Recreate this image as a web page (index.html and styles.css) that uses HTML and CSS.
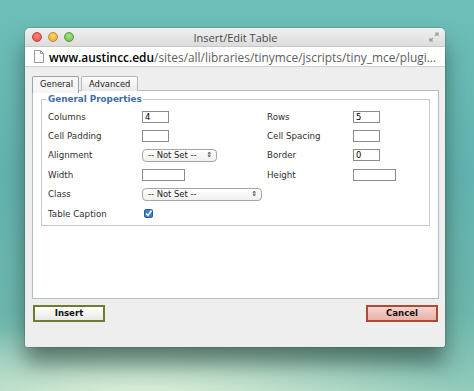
FILE: index.html
```html
<!DOCTYPE html>
<html>
<head>
<meta charset="utf-8">
<link rel="stylesheet" href="styles.css">
</head>
<body>
<div class="window">
  <div class="titlebar">
    <div class="lights">
      <span class="light red"></span>
      <span class="light yellow"></span>
      <span class="light green"></span>
    </div>
    <div class="title">Insert/Edit Table</div>
    <svg class="resize" width="10" height="10" viewBox="0 0 10 10">
      <path d="M6 1h3v3M9 1L6 4M1 6v3h3M1 9l3-3" fill="none" stroke="#9a9a9a" stroke-width="1.2"/>
    </svg>
  </div>
  <div class="urlbar">
    <svg class="pageicon" width="10" height="13" viewBox="0 0 10 13">
      <path d="M0.5 0.5h6l3 3v9h-9z" fill="#fff" stroke="#999"/>
      <path d="M6.5 0.5v3h3" fill="none" stroke="#999"/>
    </svg>
    <span class="host">www.austincc.edu</span><span class="path">/sites/all/libraries/tinymce/jscripts/tiny_mce/plugi...</span>
  </div>
  <div class="content">
    <div class="tabs">
      <div class="tab active">General</div>
      <div class="tab">Advanced</div>
    </div>
    <div class="panel">
      <fieldset class="props">
        <legend>General Properties</legend>
        <div class="grid">
          <label>Columns</label><span class="input w27">4</span>
          <label>Rows</label><span class="input w27">5</span>

          <label>Cell Padding</label><span class="input w27"></span>
          <label>Cell Spacing</label><span class="input w27"></span>

          <label>Alignment</label><span class="select w75">-- Not Set --<i>&#8661;</i></span>
          <label>Border</label><span class="input w27">0</span>

          <label>Width</label><span class="input w43"></span>
          <label>Height</label><span class="input w43"></span>

          <label>Class</label><span class="select w120 span3">-- Not Set --<i>&#8661;</i></span>

          <label>Table Caption</label><span class="check span3"><svg width="9" height="9" viewBox="0 0 9 9"><rect x="0.5" y="0.5" width="8" height="8" rx="1.5" fill="#3d7fd0" stroke="#2a5d9c"/><path d="M2 4.5l2 2 3.5-5" fill="none" stroke="#fff" stroke-width="1.4"/></svg></span>
        </div>
      </fieldset>
    </div>
    <div class="buttons">
      <div class="btn insert">Insert</div>
      <div class="btn cancel">Cancel</div>
    </div>
  </div>
</div>
</body>
</html>
```
FILE: styles.css
```css
html, body {
  margin: 0;
  padding: 0;
}
body {
  width: 474px;
  height: 391px;
  overflow: hidden;
  box-sizing: border-box;
  padding: 28px 0 0 25px;
  background:
    radial-gradient(ellipse 320px 80px at 140px 400px, rgba(228,242,218,0.95), rgba(228,242,218,0) 100%),
    linear-gradient(180deg, #6ebfb9 0%, #62b3b0 45%, #6db7ad 80%, #94cbbb 100%);
  font-family: "DejaVu Sans", Verdana, sans-serif;
}
.window {
  width: 420px;
  height: 319px;
  background: #ededed;
  border-radius: 5px 5px 3px 3px;
  box-shadow: 0 16px 22px rgba(40, 60, 50, 0.6), 0 0 0 1px rgba(0,0,0,0.12);
  display: flex;
  flex-direction: column;
  overflow: hidden;
}
.titlebar {
  height: 18px;
  background: linear-gradient(#f0f0f0, #dcdcdc);
  display: flex;
  align-items: center;
  padding: 0 6px 0 7px;
}
.lights {
  display: flex;
  gap: 6px;
}
.light {
  width: 10px;
  height: 10px;
  border-radius: 50%;
  box-sizing: border-box;
}
.red { background: radial-gradient(circle at 50% 35%, #ff8c85, #e0443c); border: 1px solid #c2423b; }
.yellow { background: radial-gradient(circle at 50% 35%, #ffd67a, #e0a52b); border: 1px solid #c08b2a; }
.green { background: radial-gradient(circle at 50% 35%, #a8e28a, #6cb84b); border: 1px solid #5a9a3d; }
.title {
  flex: 1;
  text-align: center;
  font-family: "Open Sans", "DejaVu Sans", sans-serif;
  font-size: 11px;
  color: #4a4a4a;
  padding-right: 32px;
}
.resize {
  display: block;
}
.urlbar {
  height: 21px;
  background: #fff;
  border-top: 1px solid #c8c8c8;
  border-bottom: 1px solid #cfcfcf;
  box-sizing: border-box;
  display: flex;
  align-items: center;
  padding-left: 9px;
  font-family: "Open Sans", "DejaVu Sans", sans-serif;
  font-size: 11.9px;
  white-space: nowrap;
  overflow: hidden;
}
.pageicon {
  margin-right: 5px;
  flex: none;
}
.host { color: #000; font-weight: 600; }
.path { color: #5e5e5e; }
.content {
  flex: 1;
  padding: 9px 6px 0 7px;
  background: #eeeeee;
  display: flex;
  flex-direction: column;
}
.tabs {
  display: flex;
  gap: 2px;
  height: 15px;
  position: relative;
  z-index: 1;
}
.tab {
  font-size: 8.4px;
  color: #222;
  border: 1px solid #b8b8b8;
  border-bottom: none;
  border-radius: 2px 2px 0 0;
  background: linear-gradient(#fbfbfb, #e9e9e9);
  padding: 0 7px;
  line-height: 14px;
}
.tab.active {
  background: #f6f6f6;
  height: 16px;
  width: 31px;
  border-color: #9aa4ae;
}
.panel {
  height: 209px;
  background: #fff;
  border: 1px solid #b4bcc4;
  box-sizing: border-box;
  margin-top: -1px;
  padding: 3px 8px 0 8px;
}
.props {
  margin: 0;
  border: 1px solid #c9c9c9;
  padding: 3px 0 7px 6px;
  height: 132px;
  box-sizing: border-box;
}
.props legend {
  font-size: 8.8px;
  font-weight: bold;
  color: #3e6ea8;
  padding: 0 1px;
  margin-left: -1px;
}
.grid {
  display: grid;
  grid-template-columns: 94px 125px 86px auto;
  grid-auto-rows: 19.4px;
  align-items: center;
}
.grid label {
  font-size: 8.7px;
  color: #2e2e2e;
}
.input {
  display: block;
  height: 12px;
  border: 1px solid #8c8c8c;
  box-sizing: border-box;
  font-size: 8.4px;
  line-height: 10px;
  padding-left: 2px;
  color: #000;
  background: #fff;
}
.w27 { width: 27px; }
.w43 { width: 43px; }
.select {
  display: flex;
  justify-content: space-between;
  align-items: center;
  height: 13px;
  border: 1px solid #a5a5a5;
  border-radius: 4px;
  box-sizing: border-box;
  font-size: 8.4px;
  color: #222;
  padding: 0 4px 0 5px;
  background: linear-gradient(#ffffff, #f0f0f0);
}
.select i {
  font-style: normal;
  font-size: 7px;
}
.w75 { width: 75px; }
.w120 { width: 120px; }
.span3 { grid-column: span 3; }
.check svg {
  display: block;
  margin-left: 2px;
}
.buttons {
  display: flex;
  justify-content: space-between;
  padding: 6px 1px 0 1px;
}
.btn {
  width: 72px;
  height: 17px;
  box-sizing: border-box;
  text-align: center;
  font-size: 8.6px;
  font-weight: bold;
  line-height: 13px;
  color: #111;
}
.insert {
  border: 2px solid #6f7b2e;
  background: linear-gradient(#ffffff, #e8e8e2);
}
.cancel {
  border: 2px solid #ad4a36;
  background: linear-gradient(#f6d3cc, #e9b2a8);
}
```
